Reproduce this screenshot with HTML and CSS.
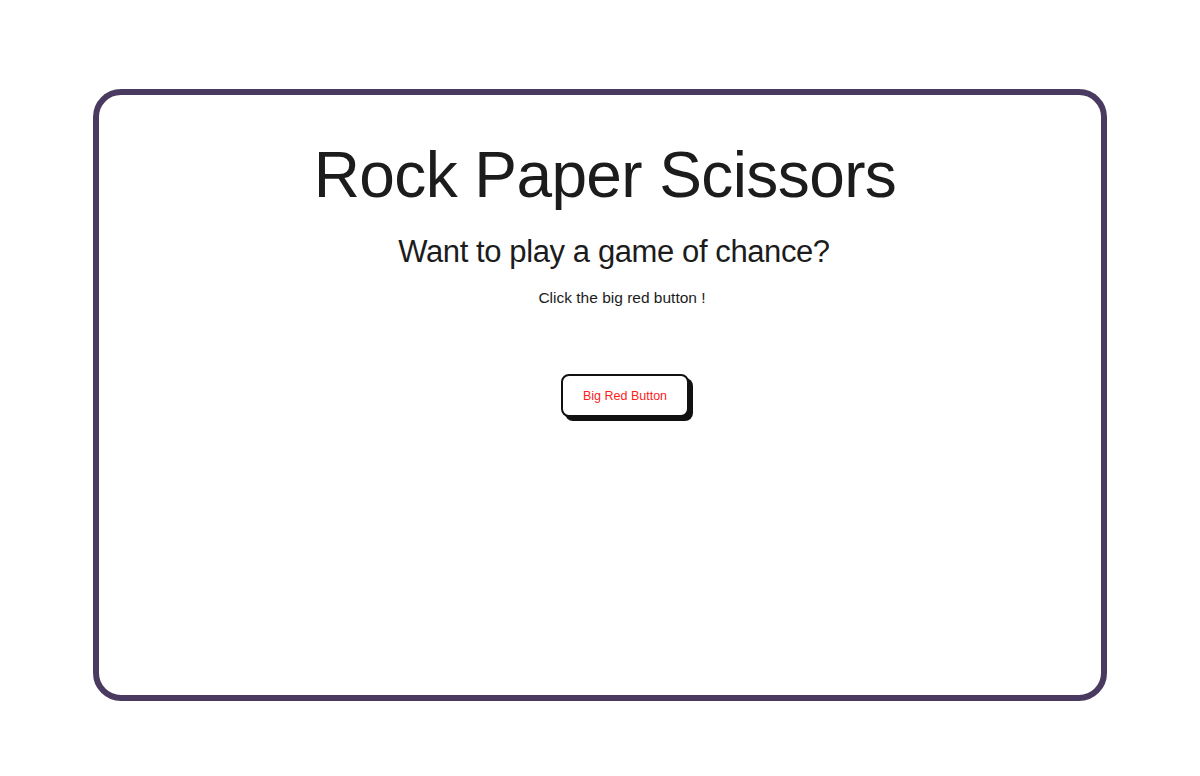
FILE: index.html
```html
<!DOCTYPE html>
<html lang="en">
<head>
<meta charset="utf-8">
<title>Rock Paper Scissors</title>
<link rel="stylesheet" href="styles.css">
</head>
<body>
  <main class="frame">
    <h1 class="title">Rock Paper Scissors</h1>
    <h2 class="subtitle">Want to play a game of chance?</h2>
    <p class="hint">Click the big red button !</p>
    <button class="big-button" type="button">Big Red Button</button>
  </main>
</body>
</html>
```
FILE: styles.css
```css
html, body {
  margin: 0;
  padding: 0;
  background: #ffffff;
}

body {
  font-family: "Liberation Sans", Arial, sans-serif;
  color: #1c1c1c;
  padding: 89px 93px 75px;
}

.frame {
  box-sizing: border-box;
  height: 612px;
  border: 6px solid #4b3a5f;
  border-radius: 28px;
  display: flex;
  flex-direction: column;
  align-items: center;
  padding-top: 40px;
}

.title {
  margin: 0 0 0 10px;
  font-size: 64px;
  font-weight: 400;
  line-height: 80px;
  letter-spacing: -0.6px;
}

.subtitle {
  margin: 17px 0 0 28px;
  font-size: 31px;
  font-weight: 400;
  line-height: 40px;
  letter-spacing: -0.4px;
}

.hint {
  margin: 16px 0 0 44px;
  font-size: 15.5px;
  line-height: 20px;
}

.big-button {
  margin: 66px 0 0 50px;
  width: 128px;
  height: 43px;
  background: #ffffff;
  border: 2px solid #111111;
  border-radius: 8px;
  box-shadow: 4px 4px 0 #111111;
  color: #ff1a1a;
  font-family: "Liberation Sans", Arial, sans-serif;
  font-size: 12.5px;
  padding: 0;
  cursor: pointer;
}
```
